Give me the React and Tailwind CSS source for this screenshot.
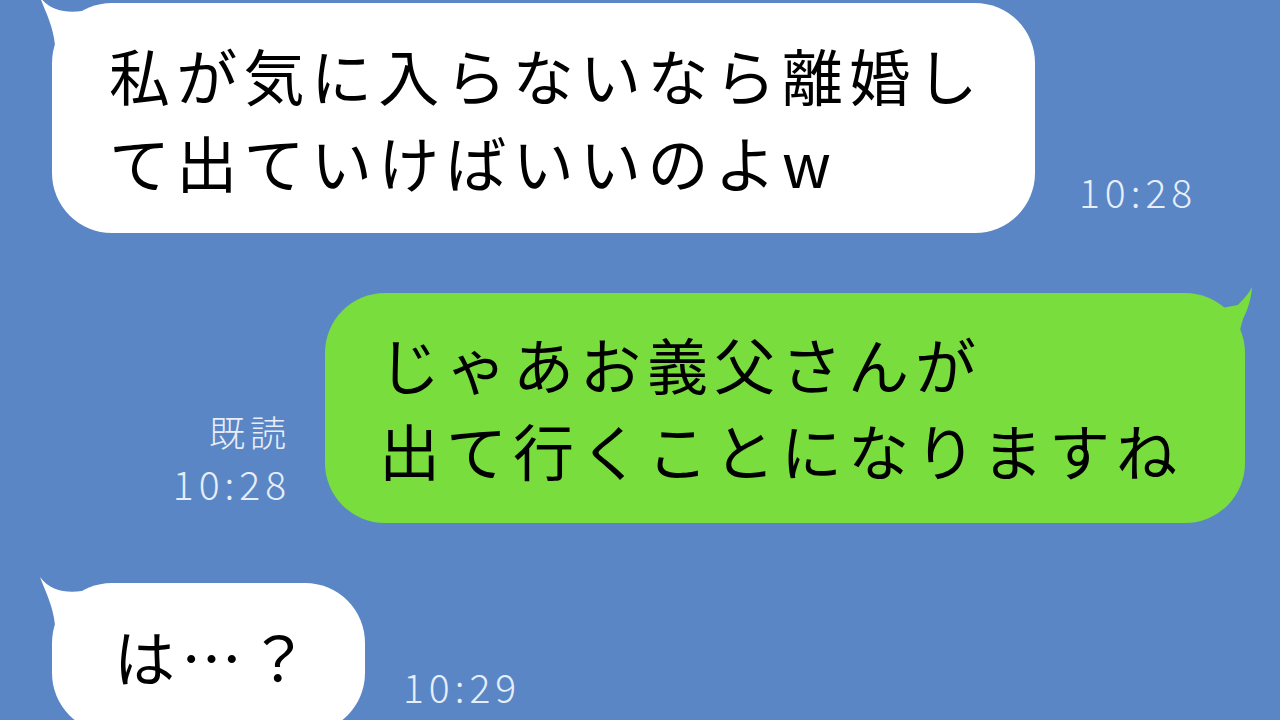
import React from "react"

const jp = { fontFamily: '"Noto Sans CJK JP", "Noto Sans", sans-serif' }

// left-side tail drawn over the top-left corner of an incoming bubble
function LeftTail() {
  return (
    <svg
      className="absolute -left-[20px] -top-[20px]"
      width="80"
      height="80"
      viewBox="0 0 80 80"
    >
      <path
        d="M8 14 C 13 28, 21 42, 23 62 L 70 70 L 70 26 L 50 28 C 34 30, 18 28, 8 14 Z"
        fill="#ffffff"
      />
    </svg>
  )
}

// right-side tail for the outgoing (green) bubble
function RightTail() {
  return (
    <svg
      className="absolute -right-[20px] -top-[20px]"
      width="80"
      height="80"
      viewBox="0 0 80 80"
    >
      <path
        d="M67 14 C 62 24, 56 28, 53 32 L 10 40 L 10 70 L 52 70 C 54 62, 56 52, 58 46 C 63 36, 66 26, 67 14 Z"
        fill="#79dd3e"
      />
    </svg>
  )
}

function Time({ children }) {
  return (
    <span
      className="block text-[39px] font-light leading-none tracking-[5px] text-[#e6eef9]"
      style={jp}
    >
      {children}
    </span>
  )
}

export default function App() {
  return (
    <div className="h-[720px] w-[1280px] overflow-hidden bg-[#5a86c5]" style={jp}>
      {/* incoming message */}
      <div className="flex items-end pl-[52px] pt-[3px]">
        <div className="relative h-[230px] w-[983px] rounded-[60px] bg-white">
          <LeftTail />
          <div className="relative pl-[57px] pt-[28px] text-[61px] leading-[87px] tracking-[6.3px] text-black">
            <div>私が気に入らないなら離婚し</div>
            <div>て出ていけばいいのよw</div>
          </div>
        </div>
        <div className="mb-[22px] ml-[44px]">
          <Time>10:28</Time>
        </div>
      </div>

      {/* outgoing message */}
      <div className="mt-[60px] flex items-end justify-end pr-[35px]">
        <div className="mb-[20px] mr-[34px] flex flex-col items-end">
          <span className="text-[36px] font-light leading-none tracking-[5px] text-[#e6eef9]">既読</span>
          <span className="mt-[15px]">
            <Time>10:28</Time>
          </span>
        </div>
        <div className="relative h-[230px] w-[920px] rounded-[60px] bg-[#79dd3e]">
          <RightTail />
          <div className="relative pl-[54px] pt-[28px] text-[61px] leading-[86px] tracking-[6px] text-black">
            <div>じゃあお義父さんが</div>
            <div>出て行くことになりますね</div>
          </div>
        </div>
      </div>

      {/* incoming reply */}
      <div className="mt-[60px] flex items-start pl-[52px]">
        <div className="relative h-[150px] w-[313px] rounded-[60px] bg-white">
          <LeftTail />
          <div className="relative pl-[62px] pt-[29px] text-[61px] leading-[87px] tracking-[6px] text-black">
            は…？
          </div>
        </div>
        <div className="ml-[38px] mt-[84px]">
          <Time>10:29</Time>
        </div>
      </div>
    </div>
  )
}
